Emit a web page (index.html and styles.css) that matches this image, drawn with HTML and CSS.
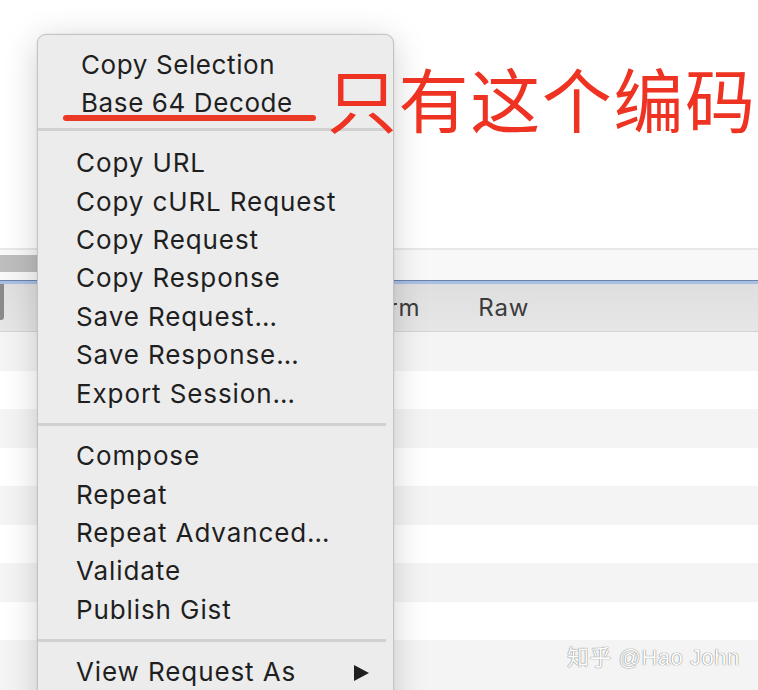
FILE: index.html
```html
<!DOCTYPE html>
<html>
<head>
<meta charset="utf-8">
<link rel="stylesheet" href="styles.css">
</head>
<body>
<div class="page">
  <div class="top-blank"></div>
  <div class="toolbar"><div class="toolbar-ctrl"></div></div>
  <div class="blue-line"></div>
  <div class="tabs">
    <div class="tab-edge"></div>
    <span class="tab tab-form">Form</span>
    <span class="tab tab-raw">Raw</span>
  </div>
  <div class="rows">
    <div class="row alt"></div>
    <div class="row"></div>
    <div class="row alt"></div>
    <div class="row"></div>
    <div class="row alt"></div>
    <div class="row"></div>
    <div class="row alt"></div>
    <div class="row"></div>
    <div class="row alt last"></div>
  </div>

  <div class="menu">
    <div class="group first">
      <div class="item">Copy Selection</div>
      <div class="item">Base 64 Decode</div>
    </div>
    <div class="sep sep1"></div>
    <div class="group">
      <div class="item">Copy URL</div>
      <div class="item">Copy cURL Request</div>
      <div class="item">Copy Request</div>
      <div class="item">Copy Response</div>
      <div class="item">Save Request…</div>
      <div class="item">Save Response…</div>
      <div class="item">Export Session…</div>
    </div>
    <div class="sep"></div>
    <div class="group">
      <div class="item">Compose</div>
      <div class="item">Repeat</div>
      <div class="item">Repeat Advanced…</div>
      <div class="item">Validate</div>
      <div class="item">Publish Gist</div>
    </div>
    <div class="sep"></div>
    <div class="group">
      <div class="item sub">View Request As
        <svg class="arrow" width="16" height="16" viewBox="0 0 16 16"><polygon points="1,0 16,8 1,16" fill="#1f1f1f"/></svg>
      </div>
    </div>
  </div>

  <div class="underline"></div>
  <div class="note">只有这个编码</div>
  <div class="watermark">知乎 @Hao John</div>
</div>
</body>
</html>
```

FILE: styles.css
```css
html, body {
  margin: 0;
  padding: 0;
  background: #ffffff;
}

.page {
  position: relative;
  width: 758px;
  height: 690px;
  overflow: hidden;
  background: #ffffff;
  font-family: "Inter", "Noto Sans", sans-serif;
}

.top-blank {
  height: 248px;
  background: #ffffff;
}

.toolbar {
  height: 30px;
  border-top: 2px solid #e8e8e8;
  background: #f8f8f8;
  display: flex;
  align-items: flex-start;
}

.toolbar-ctrl {
  margin-top: 5px;
  width: 40px;
  height: 17px;
  background: #bdbdbd;
}

.blue-line {
  height: 3px;
  border-top: 1px solid #6d83a9;
  background: #a8bfe4;
}

.tabs {
  height: 47px;
  background: linear-gradient(#dfdfdf, #e6e6e6);
  border-bottom: 1px solid #d3d3d3;
  display: flex;
  align-items: center;
  position: relative;
  font-size: 24px;
  letter-spacing: 0.8px;
  color: #3c3c3c;
}

.tab-edge {
  align-self: flex-start;
  width: 4px;
  height: 36px;
  background: #8a8a8a;
  border-radius: 0 0 3px 0;
}

.tab-form {
  margin-left: 355px;
}

.tab-raw {
  margin-left: 58px;
}

.rows {
  display: flex;
  flex-direction: column;
}

.row {
  height: 38.5px;
  background: #ffffff;
}

.row.alt {
  background: #f4f4f4;
}

.row.last {
  height: 60px;
}

/* context menu overlay */
.menu {
  position: absolute;
  left: 37px;
  top: 34px;
  width: 357px;
  height: 700px;
  background: #ececec;
  border: 1px solid #c4c4c4;
  border-radius: 9px;
  box-shadow: 0 6px 34px rgba(0, 0, 0, 0.18), 0 0 2px rgba(0, 0, 0, 0.12);
  padding-top: 11px;
  box-sizing: border-box;
  color: #1f1f1f;
  font-size: 26px;
  letter-spacing: 0.9px;
}

.group {
  padding-left: 38px;
}

.group.first {
  padding-left: 43px;
  letter-spacing: 0.6px;
}

.item {
  height: 38.4px;
  line-height: 38.4px;
  white-space: nowrap;
  display: flex;
  align-items: center;
}

.item.sub {
  justify-content: space-between;
  padding-right: 24px;
}

.arrow {
  display: block;
}

.sep {
  height: 3px;
  background: #d1d1d1;
  margin: 9.5px 7px 11.7px 0;
}

.sep.sep1 {
  margin: 5.5px 7px 13px 0;
}

/* annotation overlay */
.underline {
  position: absolute;
  left: 63px;
  top: 115px;
  width: 253px;
  height: 6px;
  border-radius: 3px;
  background: #ea3a26;
}

.note {
  position: absolute;
  left: 327px;
  top: 50px;
  font-family: "Noto Sans CJK SC", sans-serif;
  font-size: 70px;
  line-height: 96px;
  color: #ee3322;
  letter-spacing: 1.6px;
  white-space: nowrap;
}

.watermark {
  position: absolute;
  left: 567px;
  top: 645px;
  font-family: "Liberation Sans", "Noto Sans CJK SC", sans-serif;
  font-size: 22px;
  line-height: 26px;
  letter-spacing: 0.5px;
  color: #ffffff;
  text-shadow: 0 0 1px rgba(0, 0, 0, 0.55), 0 0 1px rgba(0, 0, 0, 0.35);
  white-space: nowrap;
}
```
